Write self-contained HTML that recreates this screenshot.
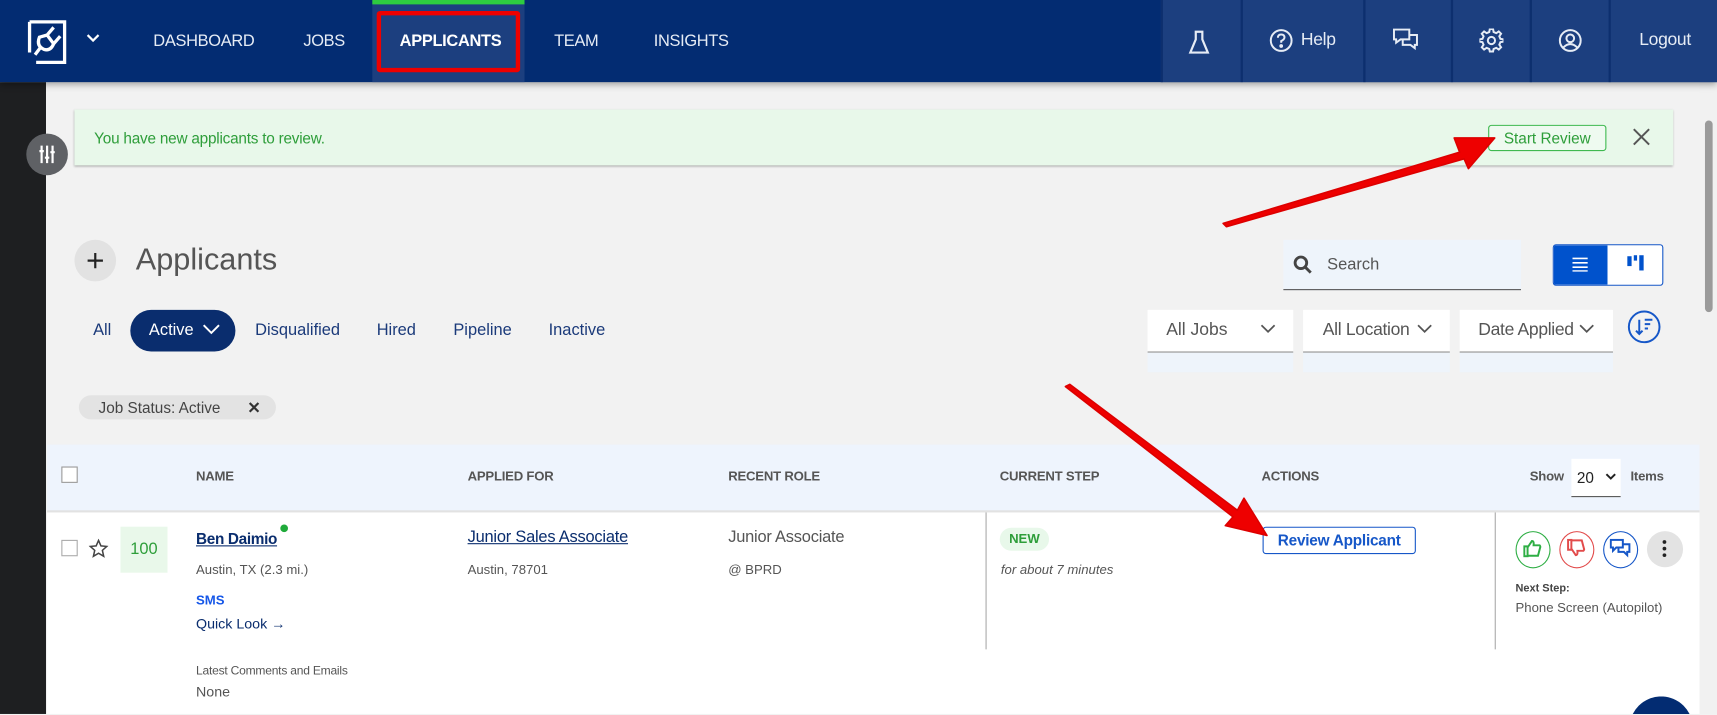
<!DOCTYPE html>
<html><head><meta charset="utf-8"><style>
html,body{margin:0;padding:0;width:1717px;height:715px;overflow:hidden;background:#f2f2f2}
#w{position:absolute;left:0;top:0;width:1568px;height:652px;overflow:hidden;transform:scale(1.09503);transform-origin:0 0;font-family:"Liberation Sans",sans-serif;background:#f2f2f2}
.a{position:absolute}
.nav{left:0;top:0;width:1568px;height:75px;background:#032c72;box-shadow:0 2px 6px rgba(0,0,0,.35);z-index:2}
.ni{position:absolute;top:29px;color:#e6ecf5;font-size:15px;letter-spacing:-.3px}
.rb{position:absolute;top:0;height:75px;background:#1c3f7f;border-left:2px solid #0d2f6e}
.th{position:absolute;top:428px;font-size:12px;font-weight:bold;color:#555;letter-spacing:-.2px}
</style></head><body><div id="w">
<div class="a" style="left:0;top:75px;width:42px;height:577px;background:#1e1f21"></div>
<div class="a" style="left:1552px;top:75px;width:16px;height:577px;background:#f1f1f1"></div>
<div class="a" style="left:1557px;top:110px;width:7px;height:175px;background:#9a9a9a;border-radius:4px"></div>
<div class="a nav">
 <svg class="a" style="left:24px;top:17px" width="38" height="42" viewBox="0 0 38 42" fill="none" stroke="#fff" stroke-width="3"><path d="M3 3H35V40H9M3 3V31"/><path d="M8 33L14 25M12 17Q9 25 16 28Q22 30 25 23L19 15ZM19 15L25 8M25 23L31 16"/></svg>
 <svg class="a" style="left:79px;top:31px" width="12" height="8"><path d="M1 1L6 6L11 1" stroke="#fff" stroke-width="2" fill="none"/></svg>
 <div class="ni" style="left:140px">DASHBOARD</div>
 <div class="ni" style="left:277px">JOBS</div>
 <div class="a" style="left:340px;top:0;width:139px;height:75px;background:#1c3f7f"></div>
 <div class="a" style="left:340px;top:0;width:139px;height:4px;background:#2ecc40"></div>
 <div class="a" style="left:344px;top:10px;width:123px;height:48px;border:4px solid #e00;border-radius:3px"></div>
 <div class="ni" style="left:365px;font-weight:bold;color:#fff">APPLICANTS</div>
 <div class="ni" style="left:506px">TEAM</div>
 <div class="ni" style="left:597px">INSIGHTS</div>
 <div class="rb" style="left:1060px;width:71px"></div>
 <div class="rb" style="left:1133px;width:110px"></div>
 <div class="rb" style="left:1245px;width:78px"></div>
 <div class="rb" style="left:1325px;width:70px"></div>
 <div class="rb" style="left:1397px;width:70px"></div>
 <div class="rb" style="left:1469px;width:99px"></div>
 <svg class="a" style="left:1085px;top:27px" width="20" height="24" fill="none" stroke="#e6ecf5" stroke-width="2"><path d="M6 2H14M7 2V9L2 21H18L13 9V2"/></svg>
 <svg class="a" style="left:1159px;top:26px" width="22" height="22" fill="none" stroke="#e6ecf5" stroke-width="1.8"><circle cx="11" cy="11" r="9.5"/><path d="M8 8.5Q8 5.5 11 5.5Q14 5.5 14 8.3Q14 10 11 11.5V13"/><circle cx="11" cy="16" r=".8" fill="#e6ecf5"/></svg>
 <div class="ni" style="left:1188px;font-size:16px;top:28px">Help</div>
 <svg class="a" style="left:1271px;top:25px" width="26" height="24" fill="none" stroke="#e6ecf5" stroke-width="1.8"><path d="M2 2H16V11H8L4 14V11H2Z"/><path d="M16 7H23V16H21V19L17 16H10V11"/></svg>
 <svg class="a" style="left:1351px;top:26px" width="22" height="22" fill="none" stroke="#e6ecf5" stroke-width="1.8"><circle cx="11" cy="11" r="3.3"/><path d="M9.5 1.5H12.5L13 4.3L15.4 5.3L17.7 3.7L19.8 5.8L18.2 8.1L19.2 10.5L22 11V13L19.2 13.5L18.2 15.9L19.8 18.2L17.7 20.3L15.4 18.7L13 19.7L12.5 22H9.5L9 19.7L6.6 18.7L4.3 20.3L2.2 18.2L3.8 15.9L2.8 13.5L0 13V11L2.8 10.5L3.8 8.1L2.2 5.8L4.3 3.7L6.6 5.3L9 4.3Z" transform="translate(0 -1)"/></svg>
 <svg class="a" style="left:1423px;top:26px" width="22" height="22" fill="none" stroke="#e6ecf5" stroke-width="1.8"><circle cx="11" cy="11" r="9.5"/><circle cx="11" cy="9" r="3.5"/><path d="M4.5 17.5Q11 11 17.5 17.5"/></svg>
 <div class="ni" style="left:1497px;font-size:16px;top:28px">Logout</div>
</div>
<div class="a" style="left:24px;top:122px;width:38px;height:38px;border-radius:50%;background:#5f6165;z-index:3"></div>
<svg class="a" style="left:34px;top:132px;z-index:4" width="18" height="18" stroke="#fff" stroke-width="2"><path d="M4 1V17M9 1V17M14 1V17"/><path d="M2 6H6M7 12H11M12 7H16"/></svg>
<div class="a" style="left:68px;top:100px;width:1460px;height:51px;background:#e8f8ea;box-shadow:0 1px 2px rgba(0,0,0,.3)"></div>
<div class="a" style="left:86px;top:118px;font-size:14px;color:#2e9e3a;letter-spacing:-.2px">You have new applicants to review.</div>
<div class="a" style="left:1359px;top:114px;width:106px;height:22px;border:1px solid #3fb950;border-radius:3px;background:#eefaf0;color:#2e9e3a;font-size:14px;text-align:center;line-height:22px">Start Review</div>
<svg class="a" style="left:1491px;top:117px" width="16" height="16" stroke="#555" stroke-width="1.8"><path d="M1 1L15 15M15 1L1 15"/></svg>
<div class="a" style="left:68px;top:219px;width:38px;height:38px;border-radius:50%;background:#e2e2e2"></div>
<svg class="a" style="left:79px;top:230px" width="16" height="16" stroke="#222" stroke-width="2"><path d="M8 1V15M1 8H15"/></svg>
<div class="a" style="left:124px;top:221px;font-size:28px;color:#555">Applicants</div>
<div class="a" style="left:1172px;top:219px;width:217px;height:45px;background:#eef4fb;border-bottom:1px solid #555"></div>
<svg class="a" style="left:1181px;top:233px" width="18" height="18" fill="none" stroke="#444" stroke-width="2.6"><circle cx="7" cy="7" r="5.3"/><path d="M11 11L16 16"/></svg>
<div class="a" style="left:1212px;top:233px;font-size:15px;color:#555">Search</div>
<div class="a" style="left:1418px;top:223px;width:99px;height:36px;border:1px solid #1657c8;border-radius:3px;background:#fff;overflow:hidden"><div style="width:49px;height:36px;background:#0052cc"></div></div>
<svg class="a" style="left:1436px;top:234px" width="14" height="14" stroke="#fff" stroke-width="1.5"><path d="M0 2H14M0 6H14M0 10H14M0 13.5H14"/></svg>
<svg class="a" style="left:1486px;top:233px" width="16" height="14" fill="#0052cc"><rect x="0" y="1" width="4" height="9"/><rect x="6" y="0" width="3" height="5"/><rect x="11" y="0" width="4" height="14"/></svg>
<div class="a" style="left:85px;top:293px;font-size:15px;color:#1b3a7a">All</div>
<div class="a" style="left:119px;top:283px;width:96px;height:38px;border-radius:19px;background:#0a2d6e"></div>
<div class="a" style="left:136px;top:293px;font-size:15px;color:#fff">Active</div>
<svg class="a" style="left:185px;top:296px" width="16" height="10"><path d="M1 1L8 8L15 1" stroke="#fff" stroke-width="1.8" fill="none"/></svg>
<div class="a" style="left:233px;top:293px;font-size:15px;color:#1b3a7a">Disqualified</div>
<div class="a" style="left:344px;top:293px;font-size:15px;color:#1b3a7a">Hired</div>
<div class="a" style="left:414px;top:293px;font-size:15px;color:#1b3a7a">Pipeline</div>
<div class="a" style="left:501px;top:293px;font-size:15px;color:#1b3a7a">Inactive</div>
<div class="a" style="left:1048px;top:283px;width:133px;height:38px;background:#fff;border-bottom:1px solid #888"></div>
<div class="a" style="left:1048px;top:322px;width:133px;height:18px;background:#eef4fb"></div>
<div class="a" style="left:1190px;top:283px;width:134px;height:38px;background:#fff;border-bottom:1px solid #888"></div>
<div class="a" style="left:1190px;top:322px;width:134px;height:18px;background:#eef4fb"></div>
<div class="a" style="left:1333px;top:283px;width:140px;height:38px;background:#fff;border-bottom:1px solid #888"></div>
<div class="a" style="left:1333px;top:322px;width:140px;height:18px;background:#eef4fb"></div>
<div class="a" style="left:1065px;top:293px;font-size:16px;color:#555">All Jobs</div>
<div class="a" style="left:1208px;top:293px;font-size:16px;color:#555;letter-spacing:-.3px">All Location</div>
<div class="a" style="left:1350px;top:293px;font-size:16px;color:#555;letter-spacing:-.3px">Date Applied</div>
<svg class="a" style="left:1151px;top:296px" width="14" height="9"><path d="M1 1L7 7L13 1" stroke="#555" stroke-width="1.6" fill="none"/></svg>
<svg class="a" style="left:1294px;top:296px" width="14" height="9"><path d="M1 1L7 7L13 1" stroke="#555" stroke-width="1.6" fill="none"/></svg>
<svg class="a" style="left:1442px;top:296px" width="14" height="9"><path d="M1 1L7 7L13 1" stroke="#555" stroke-width="1.6" fill="none"/></svg>
<svg class="a" style="left:1486px;top:283px" width="31" height="31" fill="none" stroke="#1657c8" stroke-width="1.8"><circle cx="15.5" cy="15.5" r="14"/><path d="M11 9V22M8 19L11 22L14 19M16 9H23M16 13H21M16 17H19"/></svg>
<div class="a" style="left:72px;top:361px;width:180px;height:22px;border-radius:11px;background:#e3e3e3"></div>
<div class="a" style="left:90px;top:364px;font-size:14px;color:#444">Job Status: Active</div>
<svg class="a" style="left:227px;top:367px" width="10" height="10" stroke="#333" stroke-width="2"><path d="M1 1L9 9M9 1L1 9"/></svg>
<div class="a" style="left:43px;top:406px;width:1509px;height:60px;background:#eef4fd;border-bottom:2px solid #e2e2e2"></div>
<div class="a" style="left:43px;top:468px;width:1509px;height:184px;background:#fff"></div>
<div class="a" style="left:56px;top:426px;width:13px;height:13px;border:1.5px solid #999;background:#fff"></div>
<div class="th" style="left:179px">NAME</div>
<div class="th" style="left:427px">APPLIED FOR</div>
<div class="th" style="left:665px">RECENT ROLE</div>
<div class="th" style="left:913px">CURRENT STEP</div>
<div class="th" style="left:1152px">ACTIONS</div>
<div class="th" style="left:1397px">Show</div>
<div class="a" style="left:1435px;top:419px;width:45px;height:34px;background:#fff;border-bottom:1px solid #555"></div>
<div class="a" style="left:1440px;top:428px;font-size:14px;color:#222">20</div>
<svg class="a" style="left:1466px;top:432px" width="10" height="7"><path d="M1 1L5 5L9 1" stroke="#222" stroke-width="1.8" fill="none"/></svg>
<div class="th" style="left:1489px">Items</div>
<div class="a" style="left:900px;top:468px;width:1px;height:125px;background:#aaa"></div>
<div class="a" style="left:1365px;top:468px;width:1px;height:125px;background:#aaa"></div>
<div class="a" style="left:56px;top:493px;width:13px;height:13px;border:1.5px solid #aaa"></div>
<svg class="a" style="left:81px;top:492px" width="18" height="18" fill="none" stroke="#444" stroke-width="1.4"><path d="M9 1.5L11.2 6.5L16.5 7L12.5 10.6L13.7 16L9 13.2L4.3 16L5.5 10.6L1.5 7L6.8 6.5Z"/></svg>
<div class="a" style="left:110px;top:481px;width:43px;height:42px;background:#e9f8ea;color:#2e9e3a;font-size:15px;text-align:center;line-height:42px">100</div>
<div class="a" style="left:179px;top:484px;font-size:14px;font-weight:bold;color:#0a2d6e;text-decoration:underline;letter-spacing:-.3px">Ben Daimio</div>
<div class="a" style="left:256px;top:479px;width:7px;height:7px;border-radius:50%;background:#1faa3a"></div>
<div class="a" style="left:179px;top:513px;font-size:12px;color:#555">Austin, TX (2.3 mi.)</div>
<div class="a" style="left:179px;top:541px;font-size:12px;font-weight:bold;color:#1657e8">SMS</div>
<div class="a" style="left:179px;top:562px;font-size:13px;color:#0a2d6e">Quick Look →</div>
<div class="a" style="left:179px;top:607px;font-size:11px;color:#555;letter-spacing:-.2px">Latest Comments and Emails</div>
<div class="a" style="left:179px;top:624px;font-size:13px;color:#555">None</div>
<div class="a" style="left:427px;top:482px;font-size:15px;color:#0a2d6e;text-decoration:underline;letter-spacing:-.2px">Junior Sales Associate</div>
<div class="a" style="left:427px;top:513px;font-size:12px;color:#555">Austin, 78701</div>
<div class="a" style="left:665px;top:482px;font-size:15px;color:#555;letter-spacing:-.2px">Junior Associate</div>
<div class="a" style="left:665px;top:513px;font-size:12px;color:#555">@ BPRD</div>
<div class="a" style="left:913px;top:482px;width:45px;height:21px;border-radius:11px;background:#e8f8ea;color:#2e9e3a;font-size:12px;font-weight:bold;text-align:center;line-height:21px">NEW</div>
<div class="a" style="left:914px;top:513px;font-size:12px;font-style:italic;color:#555">for about 7 minutes</div>
<div class="a" style="left:1153px;top:481px;width:138px;height:23px;border:1px solid #1657c8;border-radius:3px;color:#1657c8;font-size:14px;font-weight:bold;text-align:center;line-height:23px;letter-spacing:-.2px">Review Applicant</div>
<div class="a" style="left:1384px;top:485px;width:30px;height:32px;border-radius:50%;border:1.3px solid #2eae44"></div>
<svg class="a" style="left:1391px;top:492px" width="17" height="17" fill="none" stroke="#2eae44" stroke-width="1.8"><path d="M1 7H4V16H1ZM4 8L8 2Q10 2 9.5 6H15Q16 7 15.5 8L13.5 15.5H4"/></svg>
<div class="a" style="left:1424px;top:485px;width:30px;height:32px;border-radius:50%;border:1.3px solid #e24b4b"></div>
<svg class="a" style="left:1431px;top:492px" width="17" height="17" fill="none" stroke="#e24b4b" stroke-width="1.8"><path d="M1 1H4V10H1ZM4 9L8 15Q10 15 9.5 11H15Q16 10 15.5 9L13.5 1.5H4"/></svg>
<div class="a" style="left:1464px;top:485px;width:30px;height:32px;border-radius:50%;border:1.3px solid #1657c8"></div>
<svg class="a" style="left:1470px;top:492px" width="20" height="18" fill="none" stroke="#1657c8" stroke-width="1.8"><path d="M1 1H12V8H6L3 11V8H1Z"/><path d="M12 5H18V12H16V15L13 12H8V8"/></svg>
<div class="a" style="left:1504px;top:485px;width:33px;height:33px;border-radius:50%;background:#e3e3e3"></div>
<svg class="a" style="left:1518px;top:492px" width="4" height="18" fill="#222"><circle cx="2" cy="3" r="1.7"/><circle cx="2" cy="9" r="1.7"/><circle cx="2" cy="15" r="1.7"/></svg>
<div class="a" style="left:1384px;top:532px;font-size:10px;font-weight:bold;color:#444">Next Step:</div>
<div class="a" style="left:1384px;top:548px;font-size:12px;color:#555">Phone Screen (Autopilot)</div>
<svg class="a" style="left:1488px;top:636px" width="58" height="16"><circle cx="29" cy="29" r="29" fill="#032c72"/></svg>
<svg class="a" style="left:0;top:0;z-index:5" width="1568" height="600">
 <polygon fill="#e00" stroke="#d00" stroke-width="1.5" stroke-linejoin="round" points="1117,204 1333,139 1328,126 1365,126 1341,154 1337,145 1120,207"/>
 <polygon fill="#e00" stroke="#d00" stroke-width="1.5" stroke-linejoin="round" points="973,353 977,351 1130,466 1136,455 1157,489 1119,480 1126,472"/>
</svg>
</div></body></html>
